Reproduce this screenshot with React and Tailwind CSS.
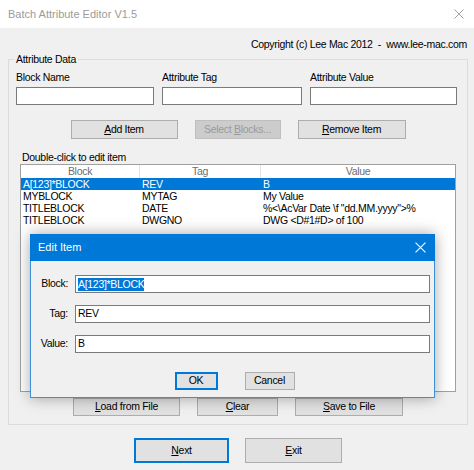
import React from 'react';

const ui = { fontFamily: '"Liberation Sans", Arial, sans-serif' };

const Btn = ({ w, children, disabled, focus, h = 'h-[18px]' }) => (
    <div
        className={`${w} ${h} flex items-center justify-center text-[10.5px] tracking-[-0.3px] ${
            disabled
                ? 'bg-[#cccccc] border border-[#bfbfbf] text-[#9a9a9a]'
                : focus
                ? 'bg-[#e1e1e1] border-2 border-[#0078d7] text-black'
                : 'bg-[#e1e1e1] border border-[#adadad] text-black'
        }`}
    >
        {children}
    </div>
);

const rows = [
    { block: 'A[123]*BLOCK', tag: 'REV', value: 'B' },
    { block: 'MYBLOCK', tag: 'MYTAG', value: 'My Value' },
    { block: 'TITLEBLOCK', tag: 'DATE', value: '%<\\AcVar Date \\f "dd.MM.yyyy">%' },
    { block: 'TITLEBLOCK', tag: 'DWGNO', value: 'DWG <D#1#D> of 100' },
];

const CloseX = ({ color, size = 10 }) => (
    <svg width={size} height={size} viewBox="0 0 10 10">
        <path d="M0.5 0.5 L9.5 9.5 M9.5 0.5 L0.5 9.5" stroke={color} strokeWidth="1" fill="none" />
    </svg>
);

const EditItem = () => (
    <div className="absolute left-[30px] top-[234px] w-[405px] h-[164px] flex flex-col shadow-[0_0_14px_rgba(0,0,0,0.35)]">
        <div className="h-[27px] bg-[#0078d7] flex items-center justify-between pl-[8px] pr-[9px]">
            <span className="text-white text-[11px]">Edit Item</span>
            <CloseX color="#ffffff" size={11} />
        </div>
        <div className="flex-1 bg-[#f0f0f0] border border-t-0 border-[#3d8fd8] flex flex-col pt-[14px]">
            {[
                ['Block:', 'A[123]*BLOCK', true],
                ['Tag:', 'REV', false],
                ['Value:', 'B', false],
            ].map(([label, val, sel], i) => (
                <div key={label} className={`flex items-center gap-[7px] ${i > 0 ? 'mt-[12px]' : ''}`}>
                    <div className="w-[37px] text-right text-[10.5px] tracking-[-0.3px]">{label}</div>
                    <div className="w-[355px] h-[18px] bg-white border border-[#7a7a7a] flex items-center px-[2px] text-[10.5px] tracking-[-0.3px]">
                        <span className={sel ? 'bg-[#0078d7] text-white leading-[13px]' : ''}>{val}</span>
                    </div>
                </div>
            ))}
            <div className="flex justify-center gap-[27px] mt-[19px] pl-[4px]">
                <Btn w="w-[43px]" focus>OK</Btn>
                <Btn w="w-[50px]">Cancel</Btn>
            </div>
        </div>
    </div>
);

export default function App() {
    return (
        <div className="relative w-[474px] h-[470px] bg-[#f0f0f0] overflow-hidden text-black" style={ui}>
            <div className="h-[28px] bg-white flex items-center justify-between pl-[8px] pr-[10px]">
                <span className="text-[11px] text-[#9b9b9b]">Batch Attribute Editor V1.5</span>
                <CloseX color="#a0a0a0" size={10} />
            </div>

            <div className="mt-[8px] h-[16px] leading-[16px] text-right pr-[7px] text-[10.5px] tracking-[-0.3px]">
                Copyright (c) Lee Mac 2012&nbsp; -&nbsp; www.lee-mac.com
            </div>

            <div className="mt-[7px] ml-[8px] w-[460px] h-[366px] border border-[#dcdcdc] flex flex-col">
                <div className="-mt-[7px] ml-[5px] w-fit px-[2px] bg-[#f0f0f0] h-[13px] leading-[13px] text-[10.5px] tracking-[-0.3px]">
                    Attribute Data
                </div>

                <div className="mt-[5px] pl-[7px] flex gap-[8px]">
                    {[
                        ['Block Name', 'w-[138px]'],
                        ['Attribute Tag', 'w-[140px]'],
                        ['Attribute Value', 'w-[147px]'],
                    ].map(([label, w]) => (
                        <div key={label} className="flex flex-col gap-[3px]">
                            <div className="h-[13px] leading-[13px] text-[10.5px] tracking-[-0.3px]">{label}</div>
                            <div className={`${w} h-[18px] bg-white border border-[#7a7a7a]`} />
                        </div>
                    ))}
                </div>

                <div className="mt-[15px] flex justify-center gap-[17px]">
                    <Btn w="w-[107px]" h="h-[19px]"><span><u>A</u>dd Item</span></Btn>
                    <Btn w="w-[86px]" h="h-[19px]" disabled><span>Select <u>B</u>locks...</span></Btn>
                    <Btn w="w-[108px]" h="h-[19px]"><span><u>R</u>emove Item</span></Btn>
                </div>

                <div className="mt-[12px] ml-[13px] h-[13px] leading-[13px] text-[10.5px] tracking-[-0.3px]">
                    Double-click to edit item
                </div>

                <div className="ml-[11px] w-[436px] h-[228px] bg-white border border-[#a0a0a0] text-[10.5px] tracking-[-0.3px]">
                    <div className="flex h-[13px] leading-[13px] text-[#6d6d6d]">
                        <div className="w-[119px] text-center border-r border-[#e5e5e5]">Block</div>
                        <div className="w-[121px] text-center border-r border-[#e5e5e5]">Tag</div>
                        <div className="flex-1 text-center">Value</div>
                    </div>
                    {rows.map((r, i) => (
                        <div
                            key={i}
                            className={`flex h-[12px] leading-[12px] ${i === 0 ? 'bg-[#0078d7] text-white' : ''}`}
                        >
                            <div className="w-[119px] pl-[2px]">{r.block}</div>
                            <div className="w-[121px] pl-[2px]">{r.tag}</div>
                            <div className="flex-1 pl-[2px]">{r.value}</div>
                        </div>
                    ))}
                </div>

                <div className="mt-[6px] flex justify-center gap-[17px]">
                    <Btn w="w-[107px]"><span><u>L</u>oad from File</span></Btn>
                    <Btn w="w-[81px]"><span><u>C</u>lear</span></Btn>
                    <Btn w="w-[108px]"><span><u>S</u>ave to File</span></Btn>
                </div>
            </div>

            <div className="mt-[13px] flex justify-center gap-[16px] pl-[2px]">
                <Btn w="w-[95px]" h="h-[25px]" focus><span><u>N</u>ext</span></Btn>
                <Btn w="w-[97px]" h="h-[25px]"><span><u>E</u>xit</span></Btn>
            </div>

            <EditItem />
        </div>
    );
}
